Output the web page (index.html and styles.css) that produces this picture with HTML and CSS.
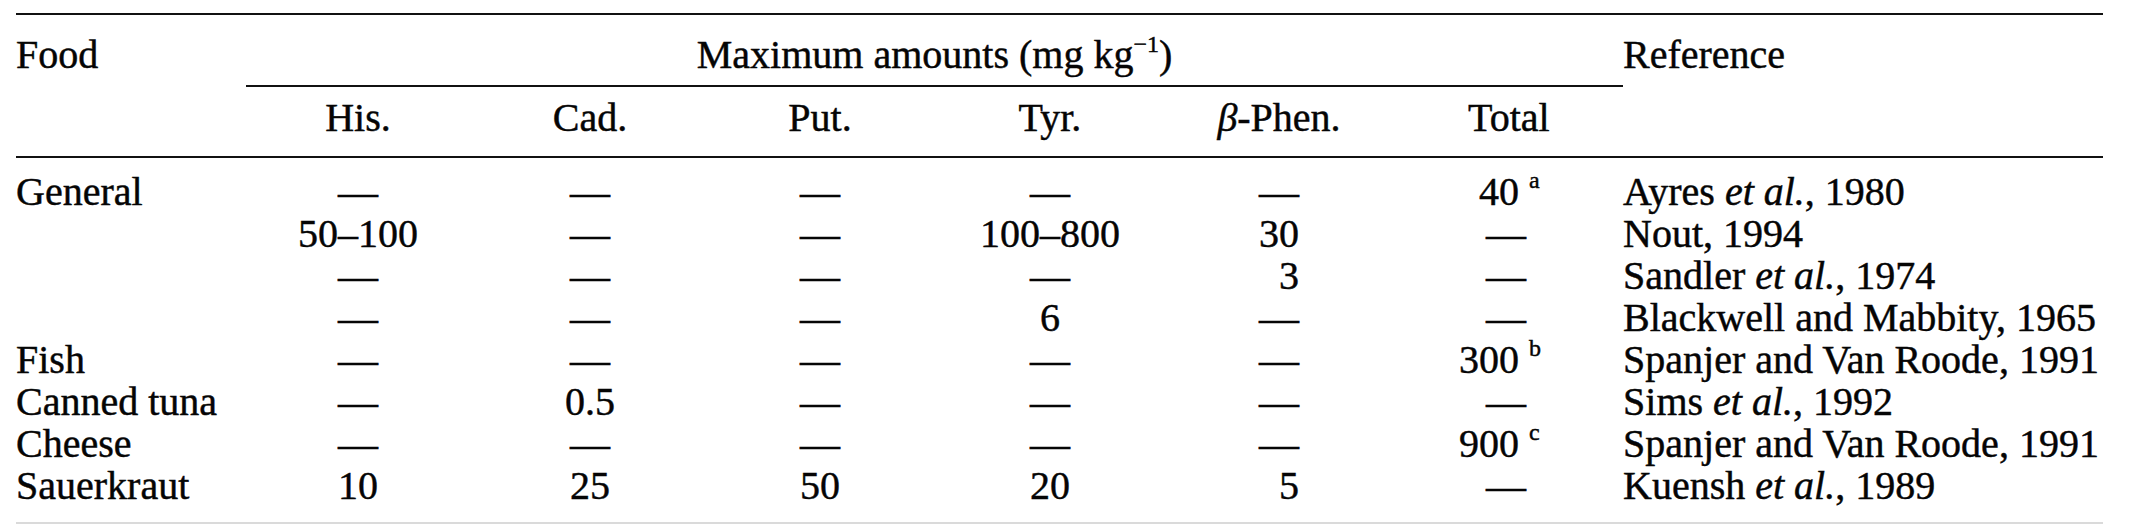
FILE: index.html
```html
<!DOCTYPE html>
<html lang="en">
<head>
<meta charset="utf-8">
<title>Maximum amounts of biogenic amines</title>
<link rel="stylesheet" href="styles.css">
</head>
<body>
<div class="page">
<table class="amines">
  <colgroup>
    <col class="c-food">
    <col class="c-his">
    <col class="c-cad">
    <col class="c-put">
    <col class="c-tyr">
    <col class="c-phen">
    <col class="c-tot">
    <col class="c-ref">
  </colgroup>
  <thead>
    <tr class="h1">
      <th rowspan="2" class="food">Food</th>
      <th colspan="6" class="group">Maximum amounts (mg kg<sup class="exp">−1</sup>)</th>
      <th rowspan="2" class="ref">Reference</th>
    </tr>
    <tr class="h2">
      <th>His.</th>
      <th>Cad.</th>
      <th>Put.</th>
      <th>Tyr.</th>
      <th><i>β</i>-Phen.</th>
      <th class="tot-h">Total</th>
    </tr>
  </thead>
  <tbody>
    <tr>
      <td class="food">General</td>
      <td>—</td><td>—</td><td>—</td><td>—</td>
      <td><span class="r">—</span></td>
      <td class="tot"><span class="n">40</span><sup class="fn">a</sup></td>
      <td class="ref">Ayres <i>et al.</i>, 1980</td>
    </tr>
    <tr>
      <td class="food"></td>
      <td>50–100</td><td>—</td><td>—</td><td>100–800</td>
      <td><span class="r">30</span></td>
      <td class="tot"><span class="n d">—</span></td>
      <td class="ref">Nout, 1994</td>
    </tr>
    <tr>
      <td class="food"></td>
      <td>—</td><td>—</td><td>—</td><td>—</td>
      <td><span class="r">3</span></td>
      <td class="tot"><span class="n d">—</span></td>
      <td class="ref">Sandler <i>et al.</i>, 1974</td>
    </tr>
    <tr>
      <td class="food"></td>
      <td>—</td><td>—</td><td>—</td><td>6</td>
      <td><span class="r">—</span></td>
      <td class="tot"><span class="n d">—</span></td>
      <td class="ref">Blackwell and Mabbity, 1965</td>
    </tr>
    <tr>
      <td class="food">Fish</td>
      <td>—</td><td>—</td><td>—</td><td>—</td>
      <td><span class="r">—</span></td>
      <td class="tot"><span class="n">300</span><sup class="fn">b</sup></td>
      <td class="ref">Spanjer and Van Roode, 1991</td>
    </tr>
    <tr>
      <td class="food">Canned tuna</td>
      <td>—</td><td>0.5</td><td>—</td><td>—</td>
      <td><span class="r">—</span></td>
      <td class="tot"><span class="n d">—</span></td>
      <td class="ref">Sims <i>et al.</i>, 1992</td>
    </tr>
    <tr>
      <td class="food">Cheese</td>
      <td>—</td><td>—</td><td>—</td><td>—</td>
      <td><span class="r">—</span></td>
      <td class="tot"><span class="n">900</span><sup class="fn">c</sup></td>
      <td class="ref">Spanjer and Van Roode, 1991</td>
    </tr>
    <tr>
      <td class="food">Sauerkraut</td>
      <td>10</td><td>25</td><td>50</td><td>20</td>
      <td><span class="r">5</span></td>
      <td class="tot"><span class="n d">—</span></td>
      <td class="ref">Kuensh <i>et al.</i>, 1989</td>
    </tr>
  </tbody>
</table>
</div>
</body>
</html>
```

FILE: styles.css
```css
html, body {
  margin: 0;
  padding: 0;
  background: #ffffff;
}

.page {
  padding: 13px 0 0 16px;
}

.amines {
  width: 2087px;
  table-layout: fixed;
  border-collapse: separate;
  border-spacing: 0;
  font-family: "Liberation Serif", "Times New Roman", serif;
  font-size: 40px;
  line-height: 42px;
  color: #050505;
  -webkit-text-stroke: 0.45px #050505;
}

.c-food { width: 230px; }
.c-his  { width: 224px; }
.c-cad  { width: 240px; }
.c-put  { width: 220px; }
.c-tyr  { width: 240px; }
.c-phen { width: 218px; }
.c-tot  { width: 235px; }
.c-ref  { width: 480px; }

.amines th,
.amines td {
  padding: 0;
  font-weight: normal;
  text-align: center;
  vertical-align: top;
  white-space: nowrap;
}

/* header */
.h1 th {
  border-top: 2px solid #111;
  padding-top: 19px;
  padding-bottom: 9px;
}

.amines th.group {
  border-bottom: 2px solid #111;
}

.amines th.food,
.amines th.ref {
  text-align: left;
  border-bottom: 2px solid #111;
}

.h2 th {
  padding-top: 10px;
  padding-bottom: 17px;
  border-bottom: 2px solid #111;
}

.amines th.tot-h {
  text-align: left;
  padding-left: 80px;
}

.exp {
  font-size: 0.6em;
  line-height: 0;
  vertical-align: 0.66em;
}

/* body */
.amines td.food,
.amines td.ref {
  text-align: left;
}

.amines tbody tr:first-child td {
  padding-top: 13px;
}

.amines tbody tr:last-child td {
  padding-bottom: 15px;
  border-bottom: 2px solid #dadada;
}

.r {
  display: inline-block;
  width: 40px;
  text-align: right;
}

.amines td.tot {
  text-align: left;
  padding-left: 71px;
}

.n {
  display: inline-block;
  width: 60px;
  text-align: right;
}

.n.d {
  width: 67px;
}

.fn {
  font-size: 0.6em;
  line-height: 0;
  vertical-align: 0.72em;
  margin-left: 10px;
}
```
